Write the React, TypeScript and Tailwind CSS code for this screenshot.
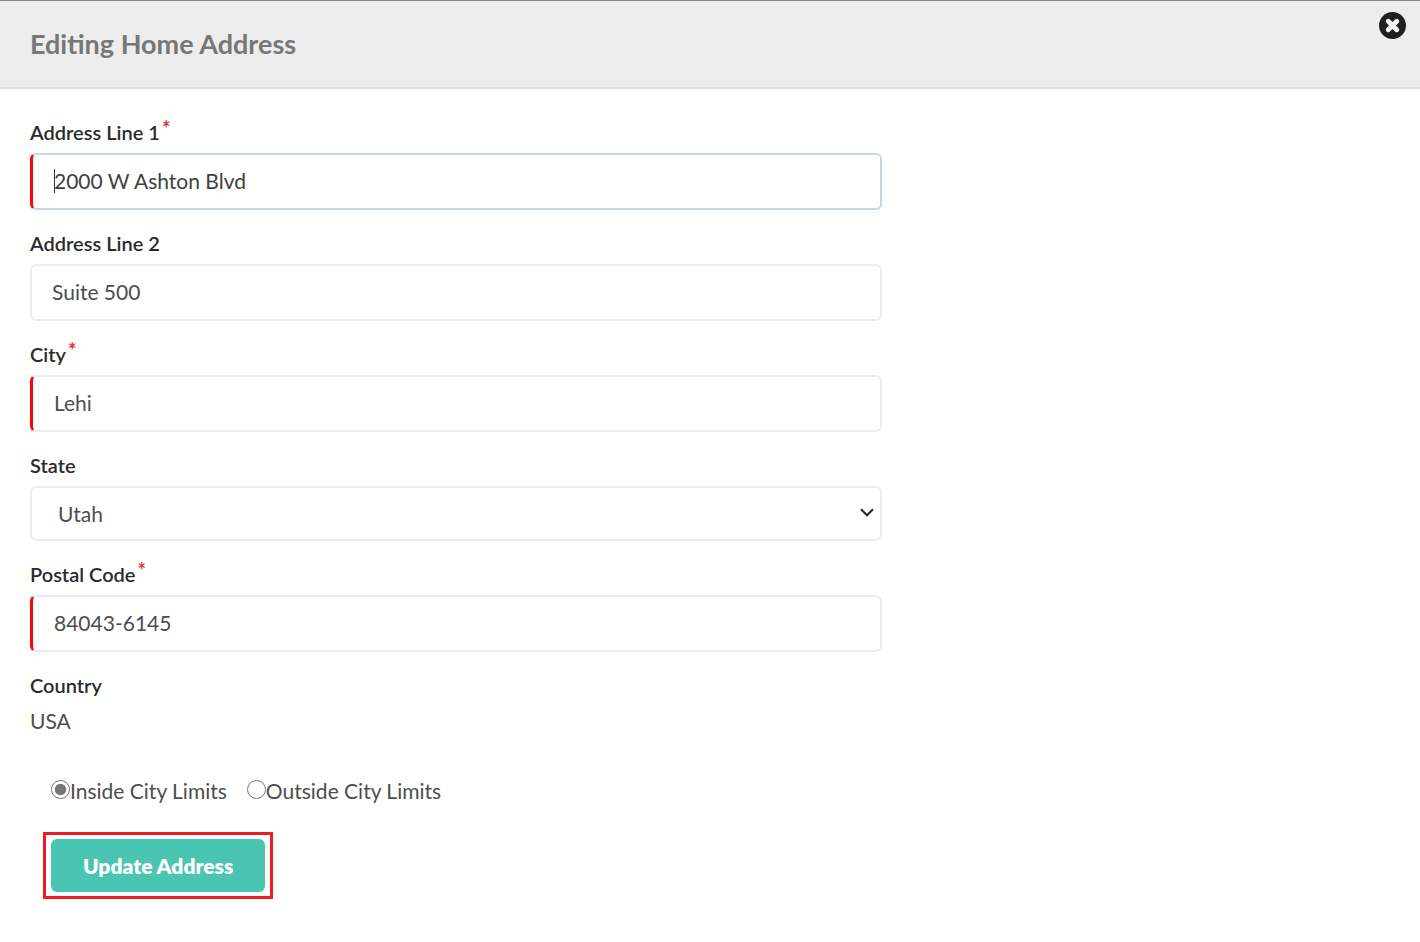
import { useState } from "react";
import type { ReactNode } from "react";

type FieldProps = {
  id: string;
  label: string;
  required?: boolean;
  children: ReactNode;
};

function Field({ id, label, required, children }: FieldProps) {
  return (
    <div className="flex flex-col gap-2">
      <label htmlFor={id} className="flex gap-0.5 text-[20px] leading-[26px] font-semibold text-[#2b2b2b]">
        {label}
        {required && <span className="leading-[18px] font-bold text-[#e63232]">*</span>}
      </label>
      {children}
    </div>
  );
}

const inputBase = "block w-full h-[57px] rounded-md border-2 bg-white pb-0.5 text-[21px] outline-none";
const optional = "border-[#ececec] px-5 text-[#4d4d4d]";
const requiredBox = "border-[#ececec] border-l-3 border-l-[#fa0505] px-[21px] text-[#4d4d4d]";
const active = "border-[#c0d9e8] border-l-3 border-l-[#fa0505] px-[21px] text-[#404040]";

export default function App() {
  const [limits, setLimits] = useState("inside");

  return (
    <div className="min-h-screen bg-white font-['Lato',sans-serif] text-[21px] text-[#4d4d4d]">
      <header className="flex items-start justify-between border-t border-b-2 border-t-[#858585] border-b-[#dfdfdf] bg-[#ededed] pl-[30px] pr-3.5">
        <h1 className="py-[25px] text-[27px] leading-9 font-bold text-[#777777]">Editing Home Address</h1>
        <button type="button" aria-label="Close" className="mt-[11px]">
          <svg viewBox="0 0 27 27" className="h-[27px] w-[27px]">
            <circle cx="13.5" cy="13.5" r="13.5" fill="#202020" />
            <path d="M9.2 9.2l8.6 8.6M17.8 9.2l-8.6 8.6" stroke="#f4f4f4" strokeWidth="4.8" strokeLinecap="round" />
          </svg>
        </button>
      </header>

      <form className="ml-[30px] pt-[30px] pb-10" onSubmit={(e) => e.preventDefault()}>
        <div className="flex w-[60vw] flex-col gap-5">
          <Field id="line1" label="Address Line 1" required>
            <div className="relative">
              <input id="line1" type="text" defaultValue="2000 W Ashton Blvd" className={`${inputBase} ${active}`} />
              <span className="absolute top-4 left-6 h-6 w-px bg-[#333333]" />
            </div>
          </Field>
          <Field id="line2" label="Address Line 2">
            <input id="line2" type="text" defaultValue="Suite 500" className={`${inputBase} ${optional}`} />
          </Field>
          <Field id="city" label="City" required>
            <input id="city" type="text" defaultValue="Lehi" className={`${inputBase} ${requiredBox}`} />
          </Field>
          <Field id="state" label="State">
            <div className="relative">
              <select
                id="state"
                defaultValue="UT"
                className="block h-[55px] w-full appearance-none rounded-md border-2 border-[#ececec] bg-white px-[26px] text-[21px] text-[#4d4d4d]"
              >
                <option value="UT">Utah</option>
              </select>
              <svg viewBox="0 0 14 9" className="pointer-events-none absolute top-[22px] right-2 h-[9px] w-3.5">
                <path d="M1 1.2l6 6 6-6" fill="none" stroke="#2b2b2b" strokeWidth="2.2" />
              </svg>
            </div>
          </Field>
          <Field id="postal" label="Postal Code" required>
            <input id="postal" type="text" defaultValue="84043-6145" className={`${inputBase} ${requiredBox}`} />
          </Field>
          <div className="flex flex-col gap-2">
            <span className="text-[20px] leading-[26px] font-semibold text-[#2b2b2b]">Country</span>
            <span className="leading-[30px]">USA</span>
          </div>
        </div>

        <div className="mt-10 ml-[21px] flex gap-5">
          <label className="flex items-start leading-[30px]">
            <input
              type="radio"
              name="limits"
              checked={limits === "inside"}
              onChange={() => setLimits("inside")}
              className="mt-1 h-[19px] w-[19px] accent-[#757575]"
            />
            Inside City Limits
          </label>
          <label className="flex items-start leading-[30px]">
            <input
              type="radio"
              name="limits"
              checked={limits === "outside"}
              onChange={() => setLimits("outside")}
              className="mt-1 h-[19px] w-[19px] accent-[#757575]"
            />
            Outside City Limits
          </label>
        </div>

        <div className="mt-[26px] ml-[13px] w-fit border-3 border-[#ed1c24] px-[5px] py-1">
          <button type="submit" className="block h-[53px] rounded-md bg-[#4ac5b1] px-8 text-[21px] font-extrabold text-white">
            Update Address
          </button>
        </div>
      </form>
    </div>
  );
}
